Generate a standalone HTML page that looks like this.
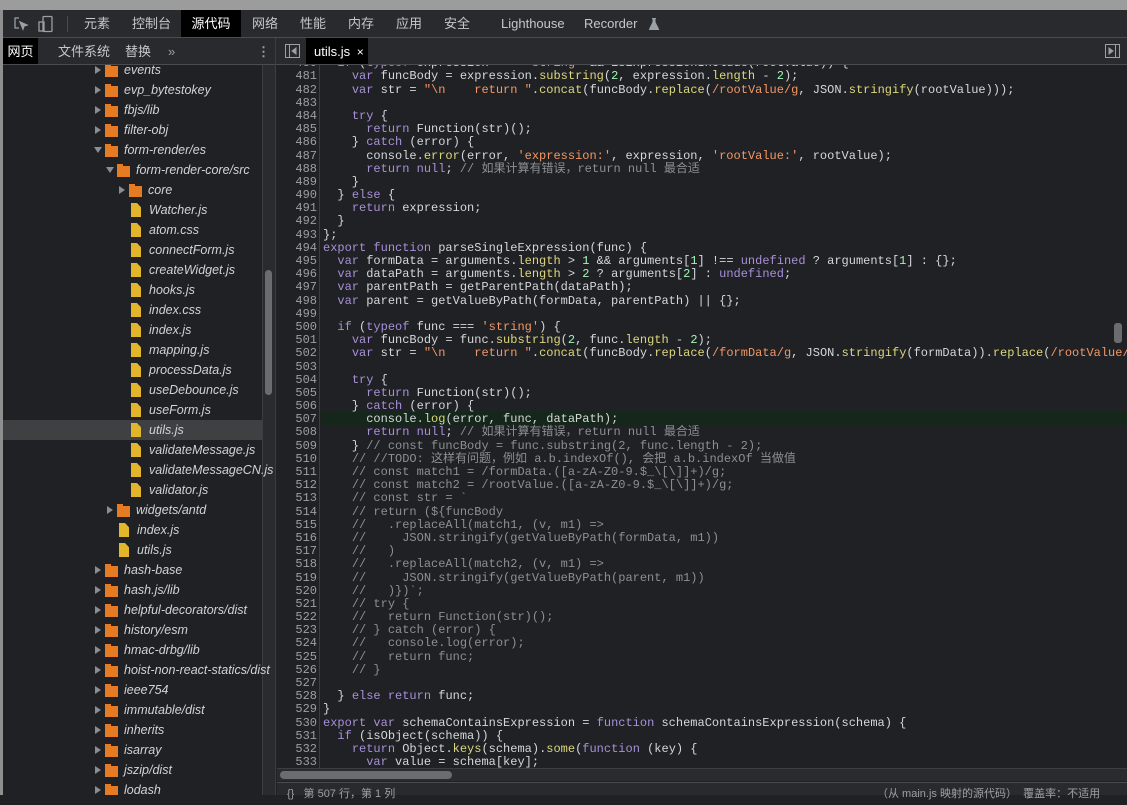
<!DOCTYPE html>
<html><head><meta charset="utf-8"><style>
*{margin:0;padding:0;box-sizing:border-box}
body{width:1127px;height:795px;overflow:hidden;background:#202124;font-family:"Liberation Sans","Noto Sans CJK SC",sans-serif;color:#bdc1c6;position:relative}
.abs{position:absolute}
#topstrip{left:0;top:0;width:1127px;height:10px;background:#9c9c9c}
#leftstrip{left:0;top:10px;width:3px;height:785px;background:#8f8f8f}
#toolbar{left:3px;top:10px;width:1124px;height:28px;background:#292a2d;border-bottom:1px solid #4a4c50}
.tt{position:absolute;top:0;height:27px;line-height:27px;font-size:13px;color:#c4c7cc}
#row2{left:3px;top:38px;width:1124px;height:27px;background:#292a2d;border-bottom:1px solid #4a4c50}
#side{left:3px;top:65px;width:273px;height:730px;background:#202124;border-right:1px solid #3c3d40;overflow:hidden}
.it{position:absolute;height:20px;line-height:20px;font-size:12.5px;font-style:italic;color:#d0d3d8;white-space:nowrap}
.arr{position:absolute;width:0;height:0;border-left:6px solid #8a8d91;border-top:4px solid transparent;border-bottom:4px solid transparent;top:6px}
.arrd{position:absolute;width:0;height:0;border-top:6px solid #8a8d91;border-left:4px solid transparent;border-right:4px solid transparent;top:7px}
.fold{position:absolute;width:13px;height:11px;background:#e57b22;top:5px}
.fold:before{content:"";position:absolute;left:0;top:-2px;width:6px;height:2px;background:#e57b22}
.file{position:absolute;width:10px;height:14px;background:#e2b52a;top:3px;clip-path:polygon(0 0,60% 0,100% 30%,100% 100%,0 100%)}
#code{left:277px;top:65px;width:850px;height:703px;background:#202124;overflow:hidden}
#gut{position:absolute;left:0;top:0;width:43px;height:703px;border-right:1px solid #3c3d40}
pre{position:absolute;left:0;top:-7.8px;font-family:"Liberation Mono","Noto Sans CJK SC",monospace;font-size:12px;line-height:13.19px;color:#d5d7da;white-space:pre}
.n{display:inline-block;width:40px;text-align:right;color:#9aa0a6;margin-right:6px}
.k{color:#a990d9}.s{color:#f29766}.m{color:#dcd77e}.g{color:#a1f7b5}.c{color:#8c8f94}
.hl{position:absolute;left:44px;top:347px;width:806px;height:13px;background:#14271a}
</style></head><body>
<div class="abs" id="topstrip"></div>
<div class="abs" id="leftstrip"></div>
<div class="abs" id="toolbar">
<svg class="abs" style="left:10px;top:6px" width="16" height="16" viewBox="0 0 16 16" fill="none" stroke="#9aa0a6" stroke-width="1.3"><path d="M6 2H2v10h4"/><path d="M7 6l7 3-3 1-1 3z" fill="#9aa0a6"/></svg>
<svg class="abs" style="left:35px;top:5px" width="16" height="18" viewBox="0 0 16 18" fill="none" stroke="#9aa0a6" stroke-width="1.3"><rect x="5" y="1.5" width="9" height="15" rx="1"/><rect x="1" y="7" width="5" height="9"/></svg>
<div class="abs" style="left:64px;top:6px;width:1px;height:16px;background:#4a4c50"></div>
<div class="tt" style="left:81px">元素</div>
<div class="tt" style="left:129px">控制台</div>
<div class="tt" style="left:178px;width:60px;background:#000;color:#fff;text-align:center">源代码</div>
<div class="tt" style="left:249px">网络</div>
<div class="tt" style="left:297px">性能</div>
<div class="tt" style="left:345px">内存</div>
<div class="tt" style="left:393px">应用</div>
<div class="tt" style="left:441px">安全</div>
<div class="tt" style="left:498px">Lighthouse</div>
<div class="tt" style="left:581px">Recorder</div>
<svg class="abs" style="left:646px;top:8px" width="10" height="12" viewBox="0 0 10 12" fill="#9aa0a6"><path d="M3 0h4v1H6.5v3L10 11v1H0v-1l3.5-7V1H3z"/></svg>
</div>
<div class="abs" id="row2">
<div class="tt" style="left:0;width:35px;background:#000;color:#fff;text-align:center;height:26px">网页</div>
<div class="tt" style="left:55px">文件系统</div>
<div class="tt" style="left:122px">替换</div>
<div class="tt" style="left:165px;color:#9aa0a6">»</div>
<div class="tt" style="left:254px;color:#9aa0a6;font-weight:bold">⋮</div>
<div class="abs" style="left:272px;top:0;width:1px;height:27px;background:#3c3d40"></div>
<svg class="abs" style="left:282px;top:6px" width="15" height="14" viewBox="0 0 15 14" fill="none" stroke="#9aa0a6"><rect x="0.5" y="0.5" width="14" height="13"/><path d="M4.5 1v12"/><path d="M11 4l-4 3 4 3z" fill="#9aa0a6"/></svg>
<div class="tt" style="left:303px;width:62px;background:#000;color:#fff;height:26px;padding-left:8px">utils.js <span style="font-size:12px;margin-left:3px">×</span></div>
<svg class="abs" style="left:1102px;top:6px" width="15" height="14" viewBox="0 0 15 14" fill="none" stroke="#9aa0a6"><rect x="0.5" y="0.5" width="14" height="13"/><path d="M10.5 1v12"/><path d="M4 4l4 3-4 3z" fill="#9aa0a6"/></svg>
</div>
<div class="abs" id="side">
<div class="abs" style="left:0;top:355px;width:259px;height:20px;background:#3f4042"></div>
<div class="abs" style="left:259px;top:0;width:14px;height:730px;background:#2a2b2e;border-left:1px solid #3c3d40"></div>
<div class="abs" style="left:262px;top:205px;width:7px;height:125px;background:#6b6c6f;border-radius:4px"></div>
<div id="tree"></div>
</div>
<div class="abs" id="code">
<div class="hl"></div>
<div id="gut"></div>
<pre>
<span class="n">480</span>  <span class="k">if</span> (<span class="k">typeof</span> expression === <span class="s">'string'</span> &amp;&amp; isExpressionInclude(rootValue)) {
<span class="n">481</span>    <span class="k">var</span> funcBody = expression.<span class="m">substring</span>(<span class="g">2</span>, expression.<span class="m">length</span> - <span class="g">2</span>);
<span class="n">482</span>    <span class="k">var</span> str = <span class="s">"\n    return "</span>.<span class="m">concat</span>(funcBody.<span class="m">replace</span>(<span class="s">/rootValue/g</span>, JSON.<span class="m">stringify</span>(rootValue)));
<span class="n">483</span>
<span class="n">484</span>    <span class="k">try</span> {
<span class="n">485</span>      <span class="k">return</span> Function(str)();
<span class="n">486</span>    } <span class="k">catch</span> (error) {
<span class="n">487</span>      console.<span class="m">error</span>(error, <span class="s">'expression:'</span>, expression, <span class="s">'rootValue:'</span>, rootValue);
<span class="n">488</span>      <span class="k">return</span> <span class="k">null</span>; <span class="c">// 如果计算有错误，return null 最合适</span>
<span class="n">489</span>    }
<span class="n">490</span>  } <span class="k">else</span> {
<span class="n">491</span>    <span class="k">return</span> expression;
<span class="n">492</span>  }
<span class="n">493</span>};
<span class="n">494</span><span class="k">export</span> <span class="k">function</span> parseSingleExpression(func) {
<span class="n">495</span>  <span class="k">var</span> formData = arguments.<span class="m">length</span> &gt; <span class="g">1</span> &amp;&amp; arguments[<span class="g">1</span>] !== <span class="k">undefined</span> ? arguments[<span class="g">1</span>] : {};
<span class="n">496</span>  <span class="k">var</span> dataPath = arguments.<span class="m">length</span> &gt; <span class="g">2</span> ? arguments[<span class="g">2</span>] : <span class="k">undefined</span>;
<span class="n">497</span>  <span class="k">var</span> parentPath = getParentPath(dataPath);
<span class="n">498</span>  <span class="k">var</span> parent = getValueByPath(formData, parentPath) || {};
<span class="n">499</span>
<span class="n">500</span>  <span class="k">if</span> (<span class="k">typeof</span> func === <span class="s">'string'</span>) {
<span class="n">501</span>    <span class="k">var</span> funcBody = func.<span class="m">substring</span>(<span class="g">2</span>, func.<span class="m">length</span> - <span class="g">2</span>);
<span class="n">502</span>    <span class="k">var</span> str = <span class="s">"\n    return "</span>.<span class="m">concat</span>(funcBody.<span class="m">replace</span>(<span class="s">/formData/g</span>, JSON.<span class="m">stringify</span>(formData)).<span class="m">replace</span>(<span class="s">/rootValue/g</span>
<span class="n">503</span>
<span class="n">504</span>    <span class="k">try</span> {
<span class="n">505</span>      <span class="k">return</span> Function(str)();
<span class="n">506</span>    } <span class="k">catch</span> (error) {
<span class="n">507</span>      console.<span class="m">log</span>(error, func, dataPath);
<span class="n">508</span>      <span class="k">return</span> <span class="k">null</span>; <span class="c">// 如果计算有错误，return null 最合适</span>
<span class="n">509</span>    } <span class="c">// const funcBody = func.substring(2, func.length - 2);</span>
<span class="n">510</span>    <span class="c">// //TODO: 这样有问题，例如 a.b.indexOf(), 会把 a.b.indexOf 当做值</span>
<span class="n">511</span>    <span class="c">// const match1 = /formData.([a-zA-Z0-9.$_\[\]]+)/g;</span>
<span class="n">512</span>    <span class="c">// const match2 = /rootValue.([a-zA-Z0-9.$_\[\]]+)/g;</span>
<span class="n">513</span>    <span class="c">// const str = `</span>
<span class="n">514</span>    <span class="c">// return (${funcBody</span>
<span class="n">515</span>    <span class="c">//   .replaceAll(match1, (v, m1) =&gt;</span>
<span class="n">516</span>    <span class="c">//     JSON.stringify(getValueByPath(formData, m1))</span>
<span class="n">517</span>    <span class="c">//   )</span>
<span class="n">518</span>    <span class="c">//   .replaceAll(match2, (v, m1) =&gt;</span>
<span class="n">519</span>    <span class="c">//     JSON.stringify(getValueByPath(parent, m1))</span>
<span class="n">520</span>    <span class="c">//   )})`;</span>
<span class="n">521</span>    <span class="c">// try {</span>
<span class="n">522</span>    <span class="c">//   return Function(str)();</span>
<span class="n">523</span>    <span class="c">// } catch (error) {</span>
<span class="n">524</span>    <span class="c">//   console.log(error);</span>
<span class="n">525</span>    <span class="c">//   return func;</span>
<span class="n">526</span>    <span class="c">// }</span>
<span class="n">527</span>
<span class="n">528</span>  } <span class="k">else</span> <span class="k">return</span> func;
<span class="n">529</span>}
<span class="n">530</span><span class="k">export</span> <span class="k">var</span> schemaContainsExpression = <span class="k">function</span> schemaContainsExpression(schema) {
<span class="n">531</span>  <span class="k">if</span> (isObject(schema)) {
<span class="n">532</span>    <span class="k">return</span> Object.<span class="m">keys</span>(schema).<span class="m">some</span>(<span class="k">function</span> (key) {
<span class="n">533</span>      <span class="k">var</span> value = schema[key];
<span class="n">534</span>      <span class="k">if</span> (isExpression(value)) {
</pre>
<div class="abs" style="left:837px;top:258px;width:8px;height:20px;background:#6b6c6f;border-radius:3px"></div>
</div>
<div class="abs" style="left:277px;top:768px;width:850px;height:13px;background:#2a2b2e;border-top:1px solid #3c3d40"></div>
<div class="abs" style="left:280px;top:771px;width:172px;height:8px;background:#6b6c6f;border-radius:4px"></div>
<div class="abs" style="left:277px;top:782px;width:850px;height:13px;background:#292a2d;border-top:1px solid #4a4c50;font-size:11px;color:#9aa0a6;line-height:22px;padding-left:10px;white-space:nowrap">{}&nbsp;&nbsp;&nbsp;第 507 行，第 1 列<span style="position:absolute;left:600px">（从 main.js 映射的源代码）&nbsp;&nbsp;覆盖率：不适用</span></div>
<script>
var items=[
["f","events",92,1],["f","evp_bytestokey",92,1],["f","fbjs/lib",92,1],["f","filter-obj",92,1],
["f","form-render/es",92,0],["f","form-render-core/src",104,0],["f","core",116,1],
["j","Watcher.js",128],["j","atom.css",128],["j","connectForm.js",128],["j","createWidget.js",128],["j","hooks.js",128],["j","index.css",128],["j","index.js",128],["j","mapping.js",128],["j","processData.js",128],["j","useDebounce.js",128],["j","useForm.js",128],["j","utils.js",128],["j","validateMessage.js",128],["j","validateMessageCN.js",128],["j","validator.js",128],
["f","widgets/antd",104,1],["j","index.js",116],["j","utils.js",116],
["f","hash-base",92,1],["f","hash.js/lib",92,1],["f","helpful-decorators/dist",92,1],["f","history/esm",92,1],["f","hmac-drbg/lib",92,1],["f","hoist-non-react-statics/dist",92,1],["f","ieee754",92,1],["f","immutable/dist",92,1],["f","inherits",92,1],["f","isarray",92,1],["f","jszip/dist",92,1],["f","lodash",92,1]];
var h="";
items.forEach(function(it,i){var y=-5+i*20;
if(it[0]=="f"){var x=it[2];
h+=(it[3]?'<div class="arr" style="left:'+x+'px;top:'+(y+6)+'px"></div>':'<div class="arrd" style="left:'+(x-1)+'px;top:'+(y+7)+'px"></div>');
h+='<div class="fold" style="left:'+(x+10)+'px;top:'+(y+6)+'px"></div><div class="it" style="left:'+(x+29)+'px;top:'+y+'px">'+it[1]+'</div>';}
else{var x=it[2];h+='<div class="file" style="left:'+x+'px;top:'+(y+3)+'px"></div><div class="it" style="left:'+(x+18)+'px;top:'+y+'px">'+it[1]+'</div>';}
});
document.getElementById("tree").innerHTML=h;
</script>
</body></html>
